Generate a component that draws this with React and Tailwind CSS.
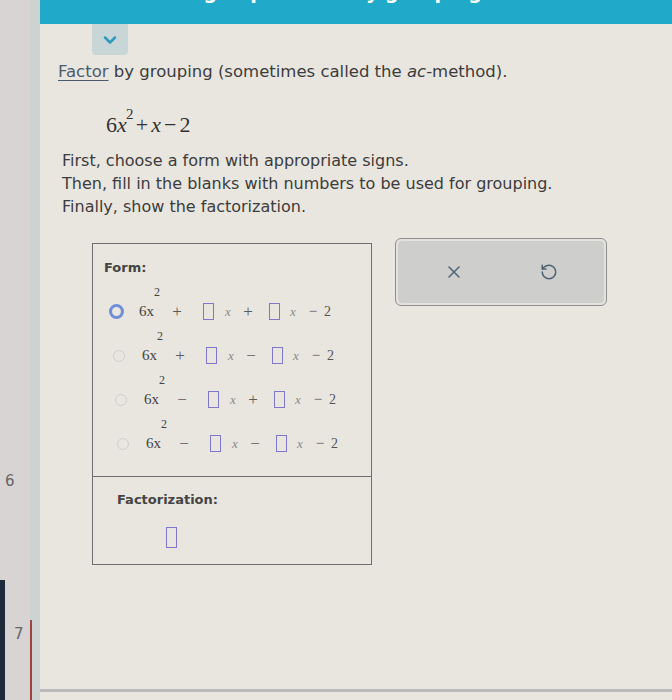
import React from 'react';
import { X, RotateCcw, ChevronDown } from 'lucide-react';

const Blank = () => (
  <span className="inline-block w-[11px] h-[17px] border-[1.5px] border-[#7f78c9] align-middle" />
);

const Sign = ({ children, className = '' }) => (
  <span className={`inline-block w-[22px] text-center text-[#5a5a5a] ${className}`}>{children}</span>
);

const FormRow = ({ signs, selected, shift }) => (
  <div className={`flex items-center h-[44px] ${shift}`}>
    <div className="w-[46px] flex justify-center">
      {selected ? (
        <span className="block w-[15px] h-[15px] rounded-full border-[3px] border-[#6f8fd8]" />
      ) : (
        <span className="block w-[12px] h-[12px] rounded-full border border-[#cfcfcf]" />
      )}
    </div>
    <span className="relative w-[24px] text-[#444] text-[15px]">
      6x<sup className="absolute -top-[8px] left-[15px] text-[12px]">2</sup>
    </span>
    <Sign className="ml-[3px] text-[17px]">{signs[0]}</Sign>
    <span className="w-[34px] flex justify-center ml-[3px]"><Blank /></span>
    <span className="italic text-[#888] text-[13px] w-[10px]">x</span>
    <Sign className="text-[17px] ml-[2px]">{signs[1]}</Sign>
    <span className="w-[28px] flex justify-center ml-[1px]"><Blank /></span>
    <span className="italic text-[#888] text-[13px] w-[12px] ml-[2px]">x</span>
    <Sign className="text-[15px]">−</Sign>
    <span className="text-[#555] text-[14px]">2</span>
  </div>
);

export default function App() {
  return (
    <div
      className="relative w-[672px] h-[700px] overflow-hidden flex bg-[#e9e6e0] text-[#3c3c3c]"
      style={{ fontFamily: '"DejaVu Sans", Verdana, sans-serif' }}
    >
      {/* left rail */}
      <div className="w-[30px] shrink-0 bg-[#d8d4d3] flex flex-col relative">
        <div className="h-[470px]" />
        <div className="pl-[5px] text-[15px] text-[#666]">6</div>
        <div className="h-[130px]" />
        <div className="pl-[14px] text-[15px] text-[#666]">7</div>
        <div className="absolute left-0 bottom-0 w-[5px] h-[120px] bg-[#1f2a3a]" />
      </div>
      <div className="w-[10px] shrink-0 bg-[#cdd3d1] relative">
        <div className="absolute left-0 bottom-0 w-[2px] h-[80px] bg-[#a0443f]" />
      </div>

      {/* main */}
      <div className="flex-1 flex flex-col relative">
        <div className="h-[24px] bg-[#21a9ca] overflow-hidden">
          <div className="-mt-[17px] ml-[76px] text-white font-bold text-[19px] leading-[18px]">
            Factoring a quadratic by grouping
          </div>
        </div>
        <div className="ml-[52px] w-[36px] h-[31px] bg-[#c9d6d8] rounded-b-[4px] flex items-center justify-center">
          <ChevronDown size={20} strokeWidth={3} className="text-[#2e9bbd]" />
        </div>

        <div className="pl-[18px] mt-[5px] text-[16.5px] leading-[24px]">
          <span className="underline underline-offset-[3px] text-[#4c5b6c]">Factor</span> by grouping (sometimes called the{' '}
          <span className="italic">ac</span>-method).
        </div>

        <div
          className="pl-[66px] mt-[26px] text-[22px] leading-[30px] text-[#333]"
          style={{ fontFamily: '"Liberation Serif", "Times New Roman", serif' }}
        >
          6<span className="relative italic">x<span className="absolute not-italic -top-[13px] left-[9px] text-[15px]">2</span></span>
          <span className="ml-[9px] mr-[3px]">+</span>
          <span className="italic">x</span>
          <span className="mx-[3px]">−</span>2
        </div>

        <div className="pl-[22px] mt-[9px] text-[16px] leading-[23px]">
          <div>First, choose a form with appropriate signs.</div>
          <div>Then, fill in the blanks with numbers to be used for grouping.</div>
          <div>Finally, show the factorization.</div>
        </div>

        <div className="flex items-start mt-[20px]">
          <div className="ml-[52px] w-[280px] border border-[#6e6e6e] mt-[5px]">
            <div className="px-[11px] pt-[14px] pb-[12px] text-[13px] font-bold text-[#444]">Form:</div>
            <div style={{ fontFamily: '"Liberation Serif", "Times New Roman", serif' }} className="pb-[10px]">
              <FormRow signs={['+', '+']} selected shift="" />
              <FormRow signs={['+', '−']} shift="ml-[3px]" />
              <FormRow signs={['−', '+']} shift="ml-[5px]" />
              <FormRow signs={['−', '−']} shift="ml-[7px]" />
            </div>
            <div className="border-t border-[#6e6e6e] h-[88px] px-[24px] pt-[13px]">
              <div className="text-[13px] font-bold text-[#444]">Factorization:</div>
              <div className="ml-[49px] mt-[18px]">
                <span className="block w-[11px] h-[21px] border-[1.5px] border-[#7f78c9]" />
              </div>
            </div>
          </div>

          <div className="ml-[23px] w-[212px] h-[68px] rounded-[6px] border border-[#8f8f8f] bg-[#e4e2dd] p-[2px]">
            <div className="w-full h-full rounded-[4px] bg-[#cececc] flex items-center justify-around px-[28px]">
              <X size={20} strokeWidth={1.8} className="text-[#4f6275]" />
              <RotateCcw size={18} strokeWidth={2} className="text-[#4f6275] ml-[40px]" />
            </div>
          </div>
        </div>

        <div className="absolute left-0 right-0 top-[689px] h-[3px] bg-[#b9bcba]" />
      </div>
    </div>
  );
}
